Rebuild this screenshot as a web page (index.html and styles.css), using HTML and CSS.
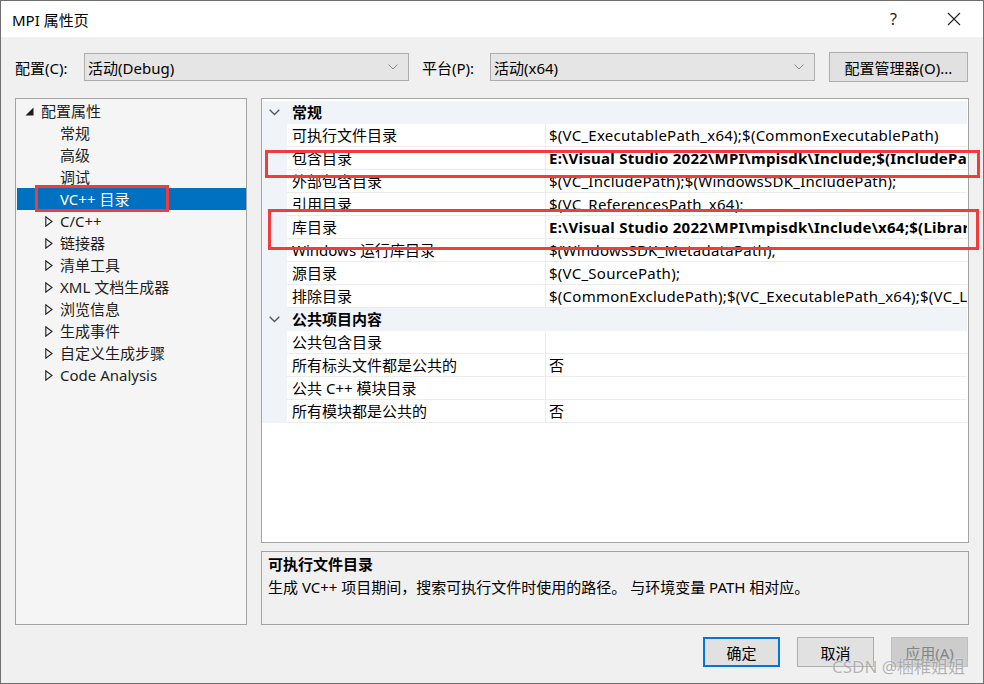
FILE: index.html
```html
<!DOCTYPE html>
<html lang="zh-CN">
<head>
    <meta charset="UTF-8">
    <title>MPI 属性页</title>
    <link rel="stylesheet" href="styles.css">
</head>
<body>
<div class="dialog">

    <!--标题栏-->
    <div class="titlebar">
        <span class="title">MPI 属性页</span>
        <span class="help">?</span>
        <svg class="close" width="14" height="14" viewBox="0 0 14 14"><path d="M1 1L13 13M13 1L1 13" stroke="#222" stroke-width="1.1" fill="none"/></svg>
    </div>

    <div class="content">
        <!--配置 / 平台-->
        <div class="config-row">
            <span class="lbl">配置(C):</span>
            <div class="combo"><span>活动(Debug)</span><svg width="10" height="6" viewBox="0 0 10 6"><path d="M0.5 0.5L5 5L9.5 0.5" stroke="#888" fill="none"/></svg></div>
            <span class="lbl plat">平台(P):</span>
            <div class="combo"><span>活动(x64)</span><svg width="10" height="6" viewBox="0 0 10 6"><path d="M0.5 0.5L5 5L9.5 0.5" stroke="#888" fill="none"/></svg></div>
            <div class="btn mgr">配置管理器(O)...</div>
        </div>

        <div class="panes">
            <!--左侧树-->
            <div class="tree">
                <div class="node lv0"><span class="tw"><svg width="9" height="9" viewBox="0 0 9 9"><path d="M8.5 0.5V8.5H0.5Z" fill="#1e1e1e"/></svg></span>配置属性</div>
                <div class="node lv1"><span class="tw"></span>常规</div>
                <div class="node lv1"><span class="tw"></span>高级</div>
                <div class="node lv1"><span class="tw"></span>调试</div>
                <div class="node lv1 on"><span class="tw"></span>VC++ 目录</div>
                <div class="node lv1"><span class="tw"><svg width="8" height="11" viewBox="0 0 8 11"><path d="M0.8 0.8V10.2L7 5.5Z" stroke="#1e1e1e" stroke-width="1.1" fill="none"/></svg></span>C/C++</div>
                <div class="node lv1"><span class="tw"><svg width="8" height="11" viewBox="0 0 8 11"><path d="M0.8 0.8V10.2L7 5.5Z" stroke="#1e1e1e" stroke-width="1.1" fill="none"/></svg></span>链接器</div>
                <div class="node lv1"><span class="tw"><svg width="8" height="11" viewBox="0 0 8 11"><path d="M0.8 0.8V10.2L7 5.5Z" stroke="#1e1e1e" stroke-width="1.1" fill="none"/></svg></span>清单工具</div>
                <div class="node lv1"><span class="tw"><svg width="8" height="11" viewBox="0 0 8 11"><path d="M0.8 0.8V10.2L7 5.5Z" stroke="#1e1e1e" stroke-width="1.1" fill="none"/></svg></span>XML 文档生成器</div>
                <div class="node lv1"><span class="tw"><svg width="8" height="11" viewBox="0 0 8 11"><path d="M0.8 0.8V10.2L7 5.5Z" stroke="#1e1e1e" stroke-width="1.1" fill="none"/></svg></span>浏览信息</div>
                <div class="node lv1"><span class="tw"><svg width="8" height="11" viewBox="0 0 8 11"><path d="M0.8 0.8V10.2L7 5.5Z" stroke="#1e1e1e" stroke-width="1.1" fill="none"/></svg></span>生成事件</div>
                <div class="node lv1"><span class="tw"><svg width="8" height="11" viewBox="0 0 8 11"><path d="M0.8 0.8V10.2L7 5.5Z" stroke="#1e1e1e" stroke-width="1.1" fill="none"/></svg></span>自定义生成步骤</div>
                <div class="node lv1"><span class="tw"><svg width="8" height="11" viewBox="0 0 8 11"><path d="M0.8 0.8V10.2L7 5.5Z" stroke="#1e1e1e" stroke-width="1.1" fill="none"/></svg></span>Code Analysis</div>
            </div>

            <div class="right">
                <!--属性表格-->
                <div class="grid">
                    <div class="cat"><span class="gut"><svg width="11" height="7" viewBox="0 0 11 7"><path d="M0.7 0.7L5.5 5.5L10.3 0.7" stroke="#555" stroke-width="1.3" fill="none"/></svg></span><span class="cname">常规</span></div>
                    <div class="row"><span class="gut"></span><span class="name">可执行文件目录</span><span class="val">$(VC_ExecutablePath_x64);$(CommonExecutablePath)</span></div>
                    <div class="row"><span class="gut"></span><span class="name">包含目录</span><span class="val b">E:\Visual Studio 2022\MPI\mpisdk\Include;$(IncludePath)</span></div>
                    <div class="row"><span class="gut"></span><span class="name">外部包含目录</span><span class="val">$(VC_IncludePath);$(WindowsSDK_IncludePath);</span></div>
                    <div class="row"><span class="gut"></span><span class="name">引用目录</span><span class="val">$(VC_ReferencesPath_x64);</span></div>
                    <div class="row"><span class="gut"></span><span class="name">库目录</span><span class="val b">E:\Visual Studio 2022\MPI\mpisdk\Include\x64;$(LibraryPath)</span></div>
                    <div class="row"><span class="gut"></span><span class="name">Windows 运行库目录</span><span class="val">$(WindowsSDK_MetadataPath);</span></div>
                    <div class="row"><span class="gut"></span><span class="name">源目录</span><span class="val">$(VC_SourcePath);</span></div>
                    <div class="row"><span class="gut"></span><span class="name">排除目录</span><span class="val">$(CommonExcludePath);$(VC_ExecutablePath_x64);$(VC_LibraryPath_x64)</span></div>
                    <div class="cat"><span class="gut"><svg width="11" height="7" viewBox="0 0 11 7"><path d="M0.7 0.7L5.5 5.5L10.3 0.7" stroke="#555" stroke-width="1.3" fill="none"/></svg></span><span class="cname">公共项目内容</span></div>
                    <div class="row"><span class="gut"></span><span class="name">公共包含目录</span><span class="val"></span></div>
                    <div class="row"><span class="gut"></span><span class="name">所有标头文件都是公共的</span><span class="val">否</span></div>
                    <div class="row"><span class="gut"></span><span class="name">公共 C++ 模块目录</span><span class="val"></span></div>
                    <div class="row"><span class="gut"></span><span class="name">所有模块都是公共的</span><span class="val">否</span></div>
                </div>

                <!--说明-->
                <div class="desc">
                    <div class="desc-title">可执行文件目录</div>
                    <div>生成 VC++ 项目期间，搜索可执行文件时使用的路径。 与环境变量 PATH 相对应。</div>
                </div>
            </div>
        </div>

        <!--底部按钮-->
        <div class="footer">
            <div class="btn ok">确定</div>
            <div class="btn">取消</div>
            <div class="btn disabled">应用(A)</div>
        </div>
    </div>

    <!--红框标注-->
    <div class="mark m-tree"></div>
    <div class="mark m-inc"></div>
    <div class="mark m-lib"></div>

    <div class="watermark">CSDN @梱稚姐姐</div>
</div>
</body>
</html>
```

FILE: styles.css
```css
*{
    margin: 0;
    padding: 0;
    box-sizing: border-box;
}
body{
    width: 984px;
    height: 684px;
    overflow: hidden;
    font-family: "Noto Sans", "Noto Sans CJK SC", sans-serif;
    font-size: 15px;
    color: #000;
}
.dialog{
    position: relative;
    width: 984px;
    height: 684px;
    border: 1px solid #6f6f6f;
    background: #f0f0f0;
    display: flex;
    flex-direction: column;
}
.titlebar{
    height: 36px;
    background: #fff;
    display: flex;
    align-items: center;
    padding-left: 11px;
}
.titlebar .title{
    flex: 1;
}
.titlebar .help{
    font-size: 16px;
    color: #222;
    margin-right: 50px;
}
.titlebar .close{
    margin-right: 22px;
}
.content{
    flex: 1;
    padding: 0 14px;
    display: flex;
    flex-direction: column;
}
.config-row{
    display: flex;
    align-items: center;
    height: 30px;
    margin-top: 15px;
    white-space: nowrap;
}
.config-row .lbl{
    width: 69px;
    flex: none;
}
.config-row .lbl.plat{
    width: 68px;
    margin-left: 13px;
}
.combo{
    flex: none;
    width: 325px;
    height: 28px;
    border: 1px solid #adadad;
    background: #e5e5e5;
    display: flex;
    align-items: center;
    justify-content: space-between;
    padding: 0 10px 0 3px;
}
.btn{
    height: 30px;
    border: 1px solid #adadad;
    background: #e1e1e1;
    display: flex;
    align-items: center;
    justify-content: center;
    white-space: nowrap;
}
.btn.mgr{
    flex: none;
    width: 139px;
    margin-left: 14px;
}
.panes{
    display: flex;
    gap: 14px;
    margin-top: 16px;
    height: 527px;
}
.tree{
    flex: none;
    width: 232px;
    border: 1px solid #a3a3a3;
    background: #f5f5f5;
    padding: 1px 0 0 1px;
    white-space: nowrap;
}
.node{
    height: 22px;
    line-height: 22px;
    display: flex;
    align-items: center;
    color: #1e1e1e;
}
.node .tw{
    flex: none;
    width: 18px;
    height: 22px;
    display: flex;
    align-items: center;
}
.node.lv0{
    padding-left: 6px;
}
.node.lv0 .tw svg{
    margin-left: 2px;
}
.node.lv1{
    padding-left: 25px;
}
.node.lv1 .tw svg{
    margin-left: 3px;
}
.node.on{
    background: #0070c0;
    color: #fff;
}
.right{
    flex: none;
    width: 708px;
    min-width: 0;
    display: flex;
    flex-direction: column;
    gap: 8px;
}
.grid{
    height: 445px;
    border: 1px solid #a3a3a3;
    background: #fff;
    padding-top: 2px;
    padding-right: 1px;
    overflow: hidden;
}
.cat, .row{
    display: flex;
    height: 23px;
    line-height: 23px;
}
.gut{
    flex: none;
    width: 25px;
    background: #f0f3f8;
    display: flex;
    align-items: center;
    justify-content: center;
}
.cat{
    background: #f0f3f8;
}
.cat .cname{
    padding-left: 5px;
    font-weight: bold;
}
.row .name{
    flex: none;
    width: 259px;
    padding-left: 5px;
    border-right: 1px solid #ececec;
    border-bottom: 1px solid #ececec;
    white-space: nowrap;
}
.row .val{
    flex: 1;
    min-width: 0;
    padding-left: 3px;
    border-bottom: 1px solid #ececec;
    white-space: nowrap;
    overflow: hidden;
    letter-spacing: 0.25px;
}
.row .val.b{
    font-weight: bold;
}
.desc{
    height: 74px;
    border: 1px solid #a3a3a3;
    background: #f0f0f0;
    padding: 1px 6px;
    line-height: 23px;
}
.desc-title{
    font-weight: bold;
}
.footer{
    display: flex;
    justify-content: flex-end;
    gap: 17px;
    margin-top: 12px;
    padding-right: 1px;
}
.footer .btn{
    width: 77px;
}
.footer .btn.ok{
    border: 2px solid #0078d7;
}
.footer .btn.disabled{
    background: #cccccc;
    border-color: #bfbfbf;
    color: #838383;
}
.mark{
    position: absolute;
    border: 3px solid #f03c3c;
}
.m-tree{
    left: 34px;
    top: 184px;
    width: 134px;
    height: 27px;
}
.m-inc{
    left: 264px;
    top: 149px;
    width: 715px;
    height: 28px;
}
.m-lib{
    left: 267px;
    top: 208px;
    width: 711px;
    height: 41px;
}
.watermark{
    position: absolute;
    left: 831px;
    top: 652px;
    font-size: 17px;
    color: rgba(110,110,110,0.5);
    text-shadow: 0 0 2px rgba(255,255,255,0.8);
    white-space: nowrap;
}
```
